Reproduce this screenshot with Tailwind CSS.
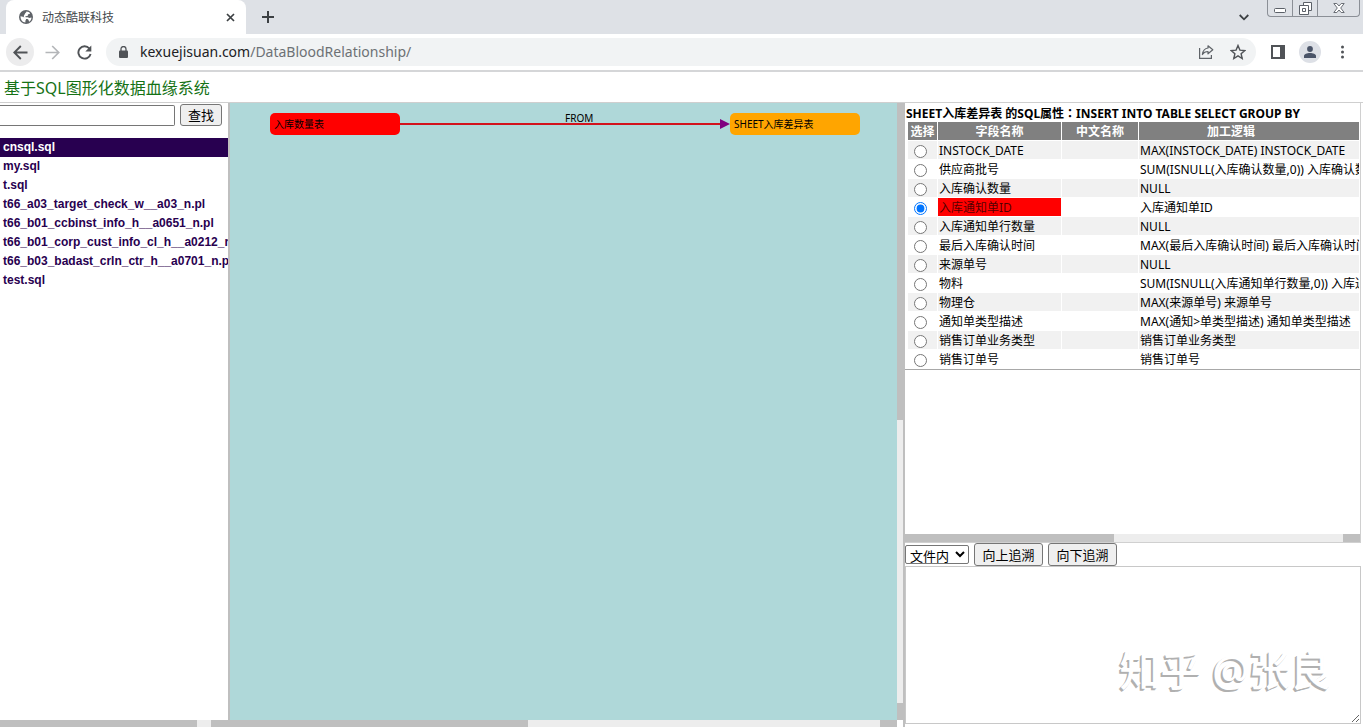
<!DOCTYPE html>
<html lang="zh-CN">
<head>
<meta charset="UTF-8">
<meta name="viewport" content="width=device-width, initial-scale=1.0">
<title>动态酷联科技</title>
<script src="https://cdn.jsdelivr.net/npm/@tailwindcss/browser@4"></script>
</head>
<body class="h-screen flex flex-col overflow-hidden bg-white text-black text-xs font-['Noto_Sans','Noto_Sans_CJK_SC',sans-serif]">

<!-- tab strip -->
<div class="relative h-[34px] shrink-0 flex items-end bg-[#dee1e6] pl-[6px]">
    <div class="h-[34px] w-[240px] flex items-center rounded-t-lg bg-white pl-[13px] pr-[10px]">
        <svg class="size-[14px]" viewBox="0 0 14 14"><circle cx="7" cy="7" r="7" fill="#5f6368"/><path d="M1.5 6.2c1.8.3 3 .3 3.600 1.300.5 1 1.600.6 1.900 1.500.2.8-.6 1.200-.6 2.200v1.300C3.500 12.300 1.500 9.800 1.500 6.200zM6.200 3.300C7 2.700 7.300 2.200 7.400 1.500c1.600.2 2.900.8 3.700 1.800-.4.800-1.200 1-2 1-.6.6.2 1.200-.6 1.700-.7.4-1.600-.2-2 .400-.4.5.6 1 1.500.9 1-.2 1.500.6 2.300.600.700 0 1.400-.5 2.200-.5 0 1.900-.9 3.400-2.300 4.400-.5-.7-.3-1.700-1-2.400-.8-.7-2.400-.3-3.400-1.200-.9-.8-1.400-2-.7-2.900.5-.7.8-1.500 1.100-2z" fill="#fff"/></svg>
        <span class="flex-1 pl-[9px] pt-px text-[#45494d]">动态酷联科技</span>
        <button aria-label="关闭标签页" class="size-3 grid place-items-center"><svg class="size-[9px]" viewBox="0 0 9 9"><path d="M1 1l7 7M8 1L1 8" stroke="#3c4043" stroke-width="1.700"/></svg></button>
    </div>
    <button aria-label="新标签页" class="h-[34px] ml-4 grid place-items-center"><svg class="size-3" viewBox="0 0 12 12"><path d="M6 0v12M0 6h12" stroke="#3c4043" stroke-width="2"/></svg></button>
    <button aria-label="搜索标签页" class="h-[34px] ml-auto mr-[18px] grid place-items-center"><svg class="w-[10px] h-[7px]" viewBox="0 0 10 7"><path d="M.7 1L5 5.300 9.300 1" fill="none" stroke="#3c4043" stroke-width="1.800"/></svg></button>
    <div class="self-start flex h-[17px] w-[93px] mr-[3px] rounded-b-[4px] border border-t-0 border-[#8b8f96]">
        <button aria-label="最小化" class="w-[25px] border-r border-[#8b8f96] grid place-items-center"><svg class="w-3 h-4" viewBox="0 0 12 16"><rect x=".5" y="8.500" width="11" height="4" rx="1" fill="#fff" stroke="#5b6068"/></svg></button>
        <button aria-label="还原" class="w-[25px] border-r border-[#8b8f96] grid place-items-center"><svg class="w-[13px] h-4" viewBox="0 0 13 16"><path d="M4.500 2.500h8v8h-8z" fill="#fff" stroke="#5b6068"/><path d="M.5 5.500h9v9h-9z" fill="#fff" stroke="#5b6068"/><path d="M3.500 8.500h3v3h-3z" fill="#fff" stroke="#5b6068"/></svg></button>
        <button aria-label="关闭" class="flex-1 grid place-items-center"><svg class="w-3 h-4" viewBox="0 0 12 16"><path d="M.8 3.500h3L6 6l2.200-2.500h3L7.700 8l3.500 4.500h-3L6 10l-2.200 2.500h-3L4.300 8z" fill="#fff" stroke="#5b6068" stroke-width=".9"/></svg></button>
    </div>
</div>

<!-- toolbar -->
<div class="h-[38px] shrink-0 flex items-center pl-[6px] pr-[18px] border-b-2 border-[#d5d6d8]">
    <button aria-label="后退" class="size-7 rounded-full bg-[#ececed] grid place-items-center"><svg class="size-[15px]" viewBox="0 0 15 15"><path d="M14.500 7.500H1.500M7.800 1L1.300 7.500l6.500 6.500" fill="none" stroke="#505357" stroke-width="1.900"/></svg></button>
    <button aria-label="前进" class="ml-[11px] size-[15px]"><svg class="size-[15px]" viewBox="0 0 15 15"><path d="M.5 7.500h13M7.200 1l6.500 6.500L7.200 14" fill="none" stroke="#b4b6b9" stroke-width="1.700"/></svg></button>
    <button aria-label="重新加载" class="ml-[17px] size-[15px]"><svg class="size-[15px]" viewBox="0 0 15 15"><path d="M12.400 3.500A6.200 6.200 0 1 0 13.600 9" fill="none" stroke="#505357" stroke-width="1.900"/><path d="M14.300.5v6H8.300z" fill="#505357"/></svg></button>
    <div class="ml-[14px] flex-1 h-7 flex items-center rounded-full bg-[#f1f3f4] pl-[13px] pr-[10px]">
        <svg class="w-[9px] h-3" viewBox="0 0 9 12"><rect y="4.500" width="9" height="7.500" rx="1" fill="#505357"/><path d="M2 5V3a2.500 2.500 0 0 1 5 0v2" fill="none" stroke="#505357" stroke-width="1.300"/></svg>
        <div class="flex-1 pl-3 text-sm text-[#6d7175]"><span class="text-[#202124]">kexuejisuan.com</span>/DataBloodRelationship/</div>
        <button aria-label="分享" class="size-4"><svg class="size-4" viewBox="0 0 16 16" fill="none" stroke="#5f6368" stroke-width="1.200"><path d="M1.600 4v10.400h11.800V11"/><path d="M10 1.800l4.800 4-4.800 4V7.500c-2.600 0-4.300.8-5.600 3C4.800 7 6.600 4.500 10 4z" stroke-linejoin="round"/></svg></button>
        <button aria-label="收藏" class="ml-4 size-4"><svg class="size-4" viewBox="0 0 16 16"><path d="M8 1.500l1.900 4.600 4.900.4-3.700 3.200 1.100 4.800L8 11.900l-4.200 2.600 1.100-4.800L1.200 6.500l4.900-.4z" fill="none" stroke="#505357" stroke-width="1.400"/></svg></button>
    </div>
    <button aria-label="侧边栏" class="ml-[15px] size-[14px]"><svg class="size-[14px]" viewBox="0 0 14 14"><path d="M0 0h14v14H0zM2 2v10h7V2z" fill="#505357" fill-rule="evenodd"/></svg></button>
    <button aria-label="用户" class="ml-[14px] size-[22px] rounded-full bg-[#dde0e6] grid place-items-center"><svg class="size-3" viewBox="0 0 12 12" fill="#4a5468"><circle cx="6" cy="3" r="2.900"/><path d="M0 12V10c0-2 3-3 6-3s6 1 6 3v2z"/></svg></button>
    <button aria-label="菜单" class="ml-[19px] w-[5px] h-[14px]"><svg class="w-[5px] h-[14px]" viewBox="0 0 5 14" fill="#505357"><circle cx="2.500" cy="2" r="1.500"/><circle cx="2.500" cy="7" r="1.500"/><circle cx="2.500" cy="12" r="1.500"/></svg></button>
</div>

<h1 class="h-[31px] shrink-0 flex items-center pl-1 pt-[2px] text-base text-[#157215] border-b border-[#cfcfcf]">基于SQL图形化数据血缘系统</h1>

<div class="flex-1 min-h-0 flex">
    <div class="flex-1 min-w-0 flex flex-col">
        <div class="flex-1 min-h-0 flex">

            <!-- file list -->
            <aside class="w-[230px] shrink-0 border-r-2 border-[#bfbfbf] overflow-hidden">
                <form class="h-[35px] flex items-start gap-[5px] pr-[6px] pt-px">
                    <input type="text" aria-label="查找文件" class="flex-1 min-w-0 h-[21px] mt-px border border-l-0 border-[#767676] rounded-r-[2px]">
                    <button type="button" class="h-[22px] w-[42px] border border-[#767676] rounded-[3px] bg-[#efefef] text-[13px] leading-5">查找</button>
                </form>
                <ul class="font-['Liberation_Sans',sans-serif] font-bold text-[#280050] leading-[19px] whitespace-nowrap">
                    <li class="pl-[3px] bg-[#280050]"><a href="#" class="text-white">cnsql.sql</a></li>
                    <li class="pl-[3px]"><a href="#">my.sql</a></li>
                    <li class="pl-[3px]"><a href="#">t.sql</a></li>
                    <li class="pl-[3px]"><a href="#">t66_a03_target_check_w__a03_n.pl</a></li>
                    <li class="pl-[3px]"><a href="#">t66_b01_ccbinst_info_h__a0651_n.pl</a></li>
                    <li class="pl-[3px]"><a href="#">t66_b01_corp_cust_info_cl_h__a0212_n.pl</a></li>
                    <li class="pl-[3px]"><a href="#">t66_b03_badast_crln_ctr_h__a0701_n.pl</a></li>
                    <li class="pl-[3px]"><a href="#">test.sql</a></li>
                </ul>
            </aside>

            <!-- lineage diagram -->
            <main class="relative flex-1 min-w-0 overflow-hidden bg-[#afd8d9] text-[10px]">
                <svg class="absolute left-[170px] top-[15px] w-[330px] h-3" viewBox="0 0 330 12"><path d="M0 6h321" stroke="#d3121c" stroke-width="2"/><path d="M320 1l10 5-10 5z" fill="#800080"/></svg>
                <span class="absolute left-[335px] top-2 leading-[14px]">FROM</span>
                <div class="absolute left-[40px] top-[10px] w-[130px] h-[22px] pl-1 leading-[22px] rounded-[5px] bg-[#ff0000]">入库数量表</div>
                <div class="absolute left-[500px] top-[10px] w-[130px] h-[22px] pl-1 leading-[22px] rounded-[5px] bg-[#ffa500]">SHEET入库差异表</div>
            </main>
            <div class="w-[6px] shrink-0 flex flex-col bg-[#ededed]">
                <div class="h-[317px] bg-[#bfbfbf]"></div>
                <div class="mt-auto h-[17px] bg-[#bfbfbf]"></div>
            </div>
        </div>
        <div class="h-[7px] shrink-0 flex bg-[#ededed]">
            <div class="w-[197px] bg-[#bfbfbf]"></div>
            <div class="ml-[14px] w-[317px] bg-[#bfbfbf]"></div>
            <div class="ml-auto w-[17px] bg-[#bfbfbf]"></div>
            <div class="w-[6px] bg-white"></div>
        </div>
    </div>

    <!-- SQL properties -->
    <section class="relative w-[460px] shrink-0 flex flex-col border-l-2 border-[#bfbfbf] pr-[2px] pb-[3px]">
        <div class="h-[440px] shrink-0 flex flex-col overflow-hidden border-b border-r border-[#d0d0d0]">
            <h2 class="h-[18px] shrink-0 pl-px leading-5 font-bold whitespace-nowrap">SHEET入库差异表 的SQL属性<span class="font-['Noto_Sans_CJK_TC',sans-serif]" lang="zh-TW">：</span>INSERT INTO TABLE SELECT GROUP BY</h2>
            <div class="pl-[2px] border-b border-[#a8a8a8] overflow-hidden">
                <table class="w-full table-fixed border-separate border-spacing-px text-left leading-4 whitespace-nowrap [&_td]:h-[18px] [&_td]:p-0 [&_td]:pl-px [&_td]:pt-[2px] [&_td]:overflow-hidden [&_th]:h-[18px] [&_th]:p-0 [&_th]:pt-[2px] [&_th]:bg-[#808080] [&_th]:text-white [&_th]:text-center [&_tbody_tr:nth-child(odd)]:bg-[#f1f1f1] [&_input]:block [&_input]:size-[13px] [&_input]:ml-[5px] [&_input]:mt-px">
                    <colgroup><col class="w-[29px]"><col class="w-[123px]"><col class="w-[76px]"><col></colgroup>
                    <thead><tr><th>选择</th><th>字段名称</th><th>中文名称</th><th><span class="pr-9">加工逻辑</span></th></tr></thead>
                    <tbody>
                        <tr><td><input type="radio" name="field" aria-label="INSTOCK_DATE"></td><td>INSTOCK_DATE</td><td></td><td>MAX(INSTOCK_DATE) INSTOCK_DATE</td></tr>
                        <tr><td><input type="radio" name="field" aria-label="供应商批号"></td><td>供应商批号</td><td></td><td>SUM(ISNULL(入库确认数量,0)) 入库确认数量</td></tr>
                        <tr><td><input type="radio" name="field" aria-label="入库确认数量"></td><td>入库确认数量</td><td></td><td>NULL</td></tr>
                        <tr><td><input type="radio" name="field" aria-label="入库通知单ID" checked></td><td class="bg-[#ff0000] text-black/70">入库通知单ID</td><td></td><td>入库通知单ID</td></tr>
                        <tr><td><input type="radio" name="field" aria-label="入库通知单行数量"></td><td>入库通知单行数量</td><td></td><td>NULL</td></tr>
                        <tr><td><input type="radio" name="field" aria-label="最后入库确认时间"></td><td>最后入库确认时间</td><td></td><td>MAX(最后入库确认时间) 最后入库确认时间</td></tr>
                        <tr><td><input type="radio" name="field" aria-label="来源单号"></td><td>来源单号</td><td></td><td>NULL</td></tr>
                        <tr><td><input type="radio" name="field" aria-label="物料"></td><td>物料</td><td></td><td>SUM(ISNULL(入库通知单行数量,0)) 入库通知单行数量</td></tr>
                        <tr><td><input type="radio" name="field" aria-label="物理仓"></td><td>物理仓</td><td></td><td>MAX(来源单号) 来源单号</td></tr>
                        <tr><td><input type="radio" name="field" aria-label="通知单类型描述"></td><td>通知单类型描述</td><td></td><td>MAX(通知&gt;单类型描述) 通知单类型描述</td></tr>
                        <tr><td><input type="radio" name="field" aria-label="销售订单业务类型"></td><td>销售订单业务类型</td><td></td><td>销售订单业务类型</td></tr>
                        <tr><td><input type="radio" name="field" aria-label="销售订单号"></td><td>销售订单号</td><td></td><td>销售订单号</td></tr>
                    </tbody>
                </table>
            </div>
            <div class="mt-auto h-2 shrink-0 flex justify-between bg-[#ededed]">
                <div class="w-[209px] bg-[#bfbfbf]"></div>
                <div class="w-[17px] bg-[#bfbfbf]"></div>
            </div>
        </div>
        <div class="h-[23px] shrink-0 flex items-center gap-[5px] text-[13px]">
            <select aria-label="追溯范围" class="h-[19px] w-16 border border-[#767676] rounded-[2px] bg-white leading-4"><option>文件内</option></select>
            <button class="h-[23px] w-[69px] border border-[#767676] rounded-[3px] bg-[#efefef] leading-5">向上追溯</button>
            <button class="h-[23px] w-[69px] border border-[#767676] rounded-[3px] bg-[#efefef] leading-5">向下追溯</button>
        </div>
        <textarea aria-label="追溯结果" class="flex-1 min-h-0 w-full border border-[#c8c8c8] resize"></textarea>
        <div class="absolute right-8 bottom-[29px] text-[41px] leading-[56px] font-medium whitespace-nowrap text-white pointer-events-none [text-shadow:-1px_1px_0_#b0b0b0,-2px_2px_0_#b0b0b0]">知乎 @张良</div>
    </section>
</div>
</body>
</html>
